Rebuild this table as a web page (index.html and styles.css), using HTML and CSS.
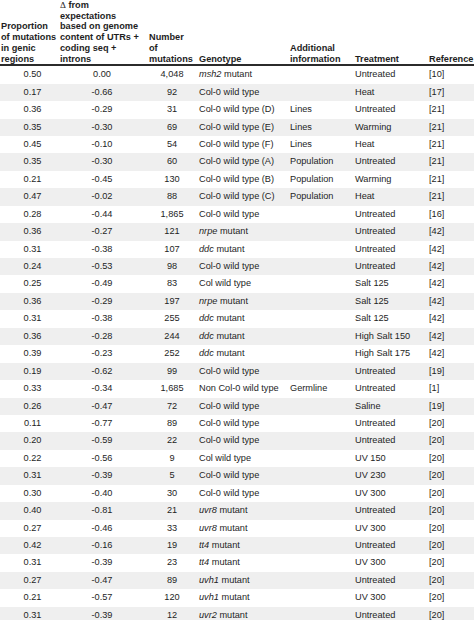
FILE: index.html
```html
<!DOCTYPE html>
<html>
<head>
<meta charset="utf-8">
<link rel="stylesheet" href="styles.css">
</head>
<body>
<table class="tbl">
<colgroup>
<col class="c1"><col class="c2"><col class="c3"><col class="c4"><col class="c5"><col class="c6"><col class="c7">
</colgroup>
<thead>
<tr>
<th class="h1">Proportion of mutations in genic regions</th>
<th class="h2"><span class="delta">Δ</span> from<br>expectations based on genome content of UTRs + coding seq + introns</th>
<th class="h3">Number of mutations</th>
<th class="h4">Genotype</th>
<th class="h5">Additional information</th>
<th class="h6">Treatment</th>
<th class="h7">Reference</th>
</tr>
</thead>
<tbody>
<tr><td class="v1">0.50</td><td class="v2">0.00</td><td class="v3">4,048</td><td class="t"><i>msh2</i> mutant</td><td class="t"></td><td class="t">Untreated</td><td class="t">[10]</td></tr>
<tr><td class="v1">0.17</td><td class="v2">-0.66</td><td class="v3">92</td><td class="t">Col-0 wild type</td><td class="t"></td><td class="t">Heat</td><td class="t">[17]</td></tr>
<tr><td class="v1">0.36</td><td class="v2">-0.29</td><td class="v3">31</td><td class="t">Col-0 wild type (D)</td><td class="t">Lines</td><td class="t">Untreated</td><td class="t">[21]</td></tr>
<tr><td class="v1">0.35</td><td class="v2">-0.30</td><td class="v3">69</td><td class="t">Col-0 wild type (E)</td><td class="t">Lines</td><td class="t">Warming</td><td class="t">[21]</td></tr>
<tr><td class="v1">0.45</td><td class="v2">-0.10</td><td class="v3">54</td><td class="t">Col-0 wild type (F)</td><td class="t">Lines</td><td class="t">Heat</td><td class="t">[21]</td></tr>
<tr><td class="v1">0.35</td><td class="v2">-0.30</td><td class="v3">60</td><td class="t">Col-0 wild type (A)</td><td class="t">Population</td><td class="t">Untreated</td><td class="t">[21]</td></tr>
<tr><td class="v1">0.21</td><td class="v2">-0.45</td><td class="v3">130</td><td class="t">Col-0 wild type (B)</td><td class="t">Population</td><td class="t">Warming</td><td class="t">[21]</td></tr>
<tr><td class="v1">0.47</td><td class="v2">-0.02</td><td class="v3">88</td><td class="t">Col-0 wild type (C)</td><td class="t">Population</td><td class="t">Heat</td><td class="t">[21]</td></tr>
<tr><td class="v1">0.28</td><td class="v2">-0.44</td><td class="v3">1,865</td><td class="t">Col-0 wild type</td><td class="t"></td><td class="t">Untreated</td><td class="t">[16]</td></tr>
<tr><td class="v1">0.36</td><td class="v2">-0.27</td><td class="v3">121</td><td class="t"><i>nrpe</i> mutant</td><td class="t"></td><td class="t">Untreated</td><td class="t">[42]</td></tr>
<tr><td class="v1">0.31</td><td class="v2">-0.38</td><td class="v3">107</td><td class="t"><i>ddc</i> mutant</td><td class="t"></td><td class="t">Untreated</td><td class="t">[42]</td></tr>
<tr><td class="v1">0.24</td><td class="v2">-0.53</td><td class="v3">98</td><td class="t">Col-0 wild type</td><td class="t"></td><td class="t">Untreated</td><td class="t">[42]</td></tr>
<tr><td class="v1">0.25</td><td class="v2">-0.49</td><td class="v3">83</td><td class="t">Col wild type</td><td class="t"></td><td class="t">Salt 125</td><td class="t">[42]</td></tr>
<tr><td class="v1">0.36</td><td class="v2">-0.29</td><td class="v3">197</td><td class="t"><i>nrpe</i> mutant</td><td class="t"></td><td class="t">Salt 125</td><td class="t">[42]</td></tr>
<tr><td class="v1">0.31</td><td class="v2">-0.38</td><td class="v3">255</td><td class="t"><i>ddc</i> mutant</td><td class="t"></td><td class="t">Salt 125</td><td class="t">[42]</td></tr>
<tr><td class="v1">0.36</td><td class="v2">-0.28</td><td class="v3">244</td><td class="t"><i>ddc</i> mutant</td><td class="t"></td><td class="t">High Salt 150</td><td class="t">[42]</td></tr>
<tr><td class="v1">0.39</td><td class="v2">-0.23</td><td class="v3">252</td><td class="t"><i>ddc</i> mutant</td><td class="t"></td><td class="t">High Salt 175</td><td class="t">[42]</td></tr>
<tr><td class="v1">0.19</td><td class="v2">-0.62</td><td class="v3">99</td><td class="t">Col-0 wild type</td><td class="t"></td><td class="t">Untreated</td><td class="t">[19]</td></tr>
<tr><td class="v1">0.33</td><td class="v2">-0.34</td><td class="v3">1,685</td><td class="t">Non Col-0 wild type</td><td class="t">Germline</td><td class="t">Untreated</td><td class="t">[1]</td></tr>
<tr><td class="v1">0.26</td><td class="v2">-0.47</td><td class="v3">72</td><td class="t">Col-0 wild type</td><td class="t"></td><td class="t">Saline</td><td class="t">[19]</td></tr>
<tr><td class="v1">0.11</td><td class="v2">-0.77</td><td class="v3">89</td><td class="t">Col-0 wild type</td><td class="t"></td><td class="t">Untreated</td><td class="t">[20]</td></tr>
<tr><td class="v1">0.20</td><td class="v2">-0.59</td><td class="v3">22</td><td class="t">Col-0 wild type</td><td class="t"></td><td class="t">Untreated</td><td class="t">[20]</td></tr>
<tr><td class="v1">0.22</td><td class="v2">-0.56</td><td class="v3">9</td><td class="t">Col wild type</td><td class="t"></td><td class="t">UV 150</td><td class="t">[20]</td></tr>
<tr><td class="v1">0.31</td><td class="v2">-0.39</td><td class="v3">5</td><td class="t">Col-0 wild type</td><td class="t"></td><td class="t">UV 230</td><td class="t">[20]</td></tr>
<tr><td class="v1">0.30</td><td class="v2">-0.40</td><td class="v3">30</td><td class="t">Col-0 wild type</td><td class="t"></td><td class="t">UV 300</td><td class="t">[20]</td></tr>
<tr><td class="v1">0.40</td><td class="v2">-0.81</td><td class="v3">21</td><td class="t"><i>uvr8</i> mutant</td><td class="t"></td><td class="t">Untreated</td><td class="t">[20]</td></tr>
<tr><td class="v1">0.27</td><td class="v2">-0.46</td><td class="v3">33</td><td class="t"><i>uvr8</i> mutant</td><td class="t"></td><td class="t">UV 300</td><td class="t">[20]</td></tr>
<tr><td class="v1">0.42</td><td class="v2">-0.16</td><td class="v3">19</td><td class="t"><i>tt4</i> mutant</td><td class="t"></td><td class="t">Untreated</td><td class="t">[20]</td></tr>
<tr><td class="v1">0.31</td><td class="v2">-0.39</td><td class="v3">23</td><td class="t"><i>tt4</i> mutant</td><td class="t"></td><td class="t">UV 300</td><td class="t">[20]</td></tr>
<tr><td class="v1">0.27</td><td class="v2">-0.47</td><td class="v3">89</td><td class="t"><i>uvh1</i> mutant</td><td class="t"></td><td class="t">Untreated</td><td class="t">[20]</td></tr>
<tr><td class="v1">0.21</td><td class="v2">-0.57</td><td class="v3">120</td><td class="t"><i>uvh1</i> mutant</td><td class="t"></td><td class="t">UV 300</td><td class="t">[20]</td></tr>
<tr><td class="v1">0.31</td><td class="v2">-0.39</td><td class="v3">12</td><td class="t"><i>uvr2</i> mutant</td><td class="t"></td><td class="t">Untreated</td><td class="t">[20]</td></tr>
</tbody>
</table>
</body>
</html>
```
FILE: styles.css
```css
html, body {
  margin: 0;
  padding: 0;
  overflow: hidden;
  background: #ffffff;
}
body {
  width: 474px;
  height: 620px;
}
.tbl {
  table-layout: fixed;
  border-collapse: collapse;
  border-spacing: 0;
  width: 496px;
  margin-left: -1px;
  font-family: "Liberation Sans", Arial, sans-serif;
  font-size: 9.2px;
  color: #1e1e1e;
}
.c1 { width: 60px; }
.c2 { width: 88px; }
.c3 { width: 50px; }
.c4 { width: 91px; }
.c5 { width: 65px; }
.c6 { width: 74px; }
.c7 { width: 68px; }
th {
  font-weight: bold;
  text-align: left;
  vertical-align: bottom;
  line-height: 10.7px;
  padding: 0 0 0 2px;
  height: 64px;
  border-bottom: 2px solid #2b2b2b;
  white-space: normal;
}
.h1 { padding-left: 2px; }
.h2 { padding-left: 1px; padding-right: 6px; }
.h3 { padding-left: 2px; padding-right: 3px; }
.h7 { white-space: nowrap; }
.delta {
  font-family: "Liberation Serif", "Times New Roman", serif;
  font-weight: normal;
  font-size: 9.2px;
  line-height: 10.7px;
}
td {
  padding: 0;
  height: 17.43px;
  line-height: 17.43px;
  white-space: nowrap;
}
tbody tr:nth-child(even) td {
  background: #efefef;
}
.v1 { text-align: center; padding-left: 8px; padding-right: 1px; }
.v2 { text-align: center; padding-left: 0; padding-right: 2px; }
.v3 { text-align: center; }
.t { padding-left: 2px; text-align: left; }
```
